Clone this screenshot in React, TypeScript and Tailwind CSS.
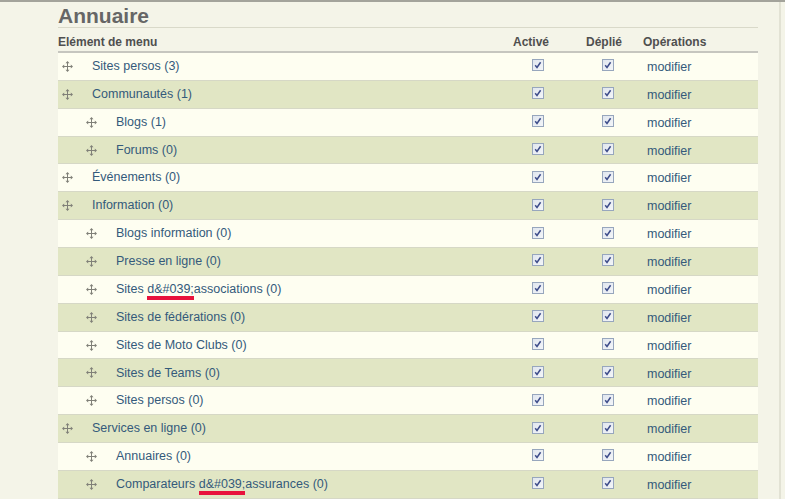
import React from 'react';

type Item = { label: React.ReactNode; level: 1 | 2 };

const Mark = ({ children }: { children: React.ReactNode }) => (
  <span className="relative inline-block">
    {children}
    <span className="absolute left-0 right-0 top-[16px] h-[4px] bg-[#e8123c]" />
  </span>
);

const items: Item[] = [
  { label: 'Sites persos (3)', level: 1 },
  { label: 'Communautés (1)', level: 1 },
  { label: 'Blogs (1)', level: 2 },
  { label: 'Forums (0)', level: 2 },
  { label: 'Événements (0)', level: 1 },
  { label: 'Information (0)', level: 1 },
  { label: 'Blogs information (0)', level: 2 },
  { label: 'Presse en ligne (0)', level: 2 },
  { label: <>Sites <Mark>d&amp;#039;</Mark>associations (0)</>, level: 2 },
  { label: 'Sites de fédérations (0)', level: 2 },
  { label: 'Sites de Moto Clubs (0)', level: 2 },
  { label: 'Sites de Teams (0)', level: 2 },
  { label: 'Sites persos (0)', level: 2 },
  { label: 'Services en ligne (0)', level: 1 },
  { label: 'Annuaires (0)', level: 2 },
  { label: <>Comparateurs <Mark>d&amp;#039;</Mark>assurances (0)</>, level: 2 },
];

const DragIcon = () => (
  <svg width="11" height="11" viewBox="0 0 11 11" className="shrink-0">
    <path d="M5.5 1.5v8M1.5 5.5h8" stroke="#808078" strokeWidth="1" />
    <path d="M5.5 0L3.5 2.2h4zM5.5 11L3.5 8.8h4zM0 5.5L2.2 3.5v4zM11 5.5L8.8 3.5v4z" fill="#808078" />
  </svg>
);

const Check = () => (
  <svg width="12" height="12" viewBox="0 0 12 12">
    <defs>
      <linearGradient id="cb" x1="0" y1="0" x2="1" y2="1">
        <stop offset="0" stopColor="#dfe5ee" />
        <stop offset="1" stopColor="#f4f6f9" />
      </linearGradient>
    </defs>
    <rect x="0.5" y="0.5" width="11" height="11" fill="url(#cb)" stroke="#97a6bd" />
    <path d="M3.2 6.3l1.8 2.2 3.6-5.2" fill="none" stroke="#3d4c8a" strokeWidth="1.5" />
  </svg>
);

export default function App() {
  return (
    <div
      className="relative w-[785px] h-[499px] overflow-hidden bg-[#f4f4e8] border-t-2 border-[#a3a39b]"
      style={{ fontFamily: '"Liberation Sans", Arial, sans-serif' }}
    >
      <div className="absolute right-[4px] top-0 bottom-0 w-[2px] bg-[#e2e2d4]" />
      <div className="ml-[58px] w-[700px]">
        <h1 className="h-[26px] pt-[2px] text-[21px] leading-[24px] font-bold text-[#666] border-b border-[#d9d9c9]">
          Annuaire
        </h1>
        <div className="grid grid-cols-[448px_72px_64px_1fr] h-[25px] items-center pt-[4px] text-[12px] font-bold text-[#4f4f4f] border-b-[2px] border-[#c6c6bf]">
          <div>Elément de menu</div>
          <div className="pl-[7px]">Activé</div>
          <div className="pl-[8px]">Déplié</div>
          <div className="pl-[1px]">Opérations</div>
        </div>
        {items.map((it, i) => (
          <div
            key={i}
            className={`grid grid-cols-[448px_72px_64px_1fr] h-[27.86px] items-center border-b border-[#d6d8c6] text-[12.5px] ${
              i % 2 === 0 ? 'bg-[#fefef1]' : 'bg-[#e1e6c4]'
            }`}
          >
            <div className={`flex items-center ${it.level === 1 ? 'pl-[4px]' : 'pl-[28px]'}`}>
              <DragIcon />
              <span className="ml-[19px] text-[#345a7b] whitespace-nowrap">{it.label}</span>
            </div>
            <div className="pl-[26px] -mt-[2px] flex">
              <Check />
            </div>
            <div className="pl-[24px] -mt-[2px] flex">
              <Check />
            </div>
            <div className="pl-[5px] pt-[2px] text-[#345a7b]">modifier</div>
          </div>
        ))}
      </div>
    </div>
  );
}
